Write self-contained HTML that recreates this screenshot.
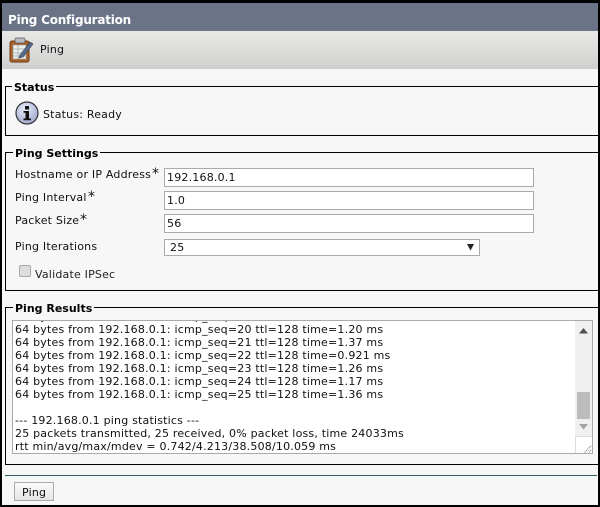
<!DOCTYPE html>
<html><head><meta charset="utf-8"><style>
html,body{margin:0;padding:0;background:#f7f7f7}
#p{position:relative;width:600px;height:507px;overflow:hidden;background:#f7f7f7;font-family:"DejaVu Sans",Verdana,sans-serif;font-size:11px;letter-spacing:.2px;color:#111}
#p div,#p svg{position:absolute}
.t{white-space:pre;line-height:14px}
.b{font-weight:bold;font-size:11px;letter-spacing:0;color:#000;background:#f7f7f7;padding:0 2px}
.fs{left:5px;width:594px;border:1px solid #000;border-right:0;box-sizing:border-box}
.in{left:164px;width:370px;height:19px;background:#fff;border:1px solid #aaa;box-sizing:border-box}
.star{font-size:14px}
</style></head><body><div id="p">
<div style="left:0;top:3px;width:600px;height:28px;background:#6b7387"></div>
<div class="t" style="left:8px;top:13px;font-weight:bold;font-size:12px;letter-spacing:-.22px;color:#fff">Ping Configuration</div>
<div style="left:0;top:31px;width:600px;height:38px;background:linear-gradient(#e9e9e7,#cfcfcd)"></div>
<svg style="left:9px;top:37px" width="25" height="26" viewBox="0 0 25 26"><rect x="1" y="4" width="19" height="21" rx="2" fill="#a8622a" stroke="#6b3a14"/><rect x="4" y="8" width="13" height="14" fill="#eef0ee" stroke="#999" stroke-width=".6"/><path d="M4 12h13M4 16h13M4 19h13M9 8v14" stroke="#9aa" stroke-width=".7"/><rect x="6" y="1" width="10" height="5" rx="1.500" fill="#b8bcc0" stroke="#555" stroke-width=".7"/><path d="M11 18L21 5l3 2-10 13-4 1z" fill="#5a6b8c" stroke="#2d3850" stroke-width=".6"/></svg>
<div class="t" style="left:40px;top:43px;color:#111">Ping</div>

<div class="fs" style="top:86px;height:50px"></div>
<div class="t b" style="left:12px;top:81px">Status</div>
<svg style="left:15px;top:100px" width="24" height="26" viewBox="0 0 24 26"><defs><radialGradient id="g" cx=".4" cy=".3" r=".8"><stop offset="0" stop-color="#e8ecf8"/><stop offset="1" stop-color="#9aa4cc"/></radialGradient></defs><circle cx="12" cy="13" r="11" fill="url(#g)" stroke="#333" stroke-width="1.2"/><rect x="10" y="6" width="4" height="3.500" fill="#111"/><path d="M8.500 11h5.500v7.500h2v1.700H8.500v-1.700h2v-5.800h-2z" fill="#111"/></svg>
<div class="t" style="left:43px;top:108px">Status: Ready</div>

<div class="fs" style="top:152px;height:139px"></div>
<div class="t b" style="left:13px;top:147px">Ping Settings</div>
<div class="t" style="left:15px;top:168px">Hostname or IP Address</div><div class="t star" style="left:152px;top:167px">*</div>
<div class="t" style="left:15px;top:191px">Ping Interval</div><div class="t star" style="left:88px;top:190px">*</div>
<div class="t" style="left:15px;top:214px">Packet Size</div><div class="t star" style="left:80px;top:213px">*</div>
<div class="t" style="left:15px;top:240px">Ping Iterations</div>
<div class="in" style="top:168px"></div><div class="t" style="left:167px;top:171px">192.168.0.1</div>
<div class="in" style="top:191px"></div><div class="t" style="left:167px;top:194px">1.0</div>
<div class="in" style="top:214px"></div><div class="t" style="left:167px;top:217px">56</div>
<div class="in" style="top:239px;width:316px;height:17px"></div><div class="t" style="left:170px;top:241px">25</div>
<svg style="left:466px;top:243px" width="9" height="8"><path d="M1 1h7L4.500 7.500z" fill="#222"/></svg>
<div style="left:19px;top:265px;width:12px;height:12px;background:#ddd;border:1px solid #aaa;border-radius:2px;box-sizing:border-box"></div>
<div class="t" style="left:35px;top:268px;color:#222">Validate IPSec</div>

<div class="fs" style="top:307px;height:158px"></div>
<div class="t b" style="left:13px;top:302px">Ping Results</div>
<div style="left:12px;top:320px;width:581px;height:134px;background:#fff;border:1px solid #aaa;box-sizing:border-box;overflow:hidden">
<div class="t" style="left:2px;top:-11px;line-height:13px;color:#111">64 bytes from 192.168.0.1: icmp_seq=19 ttl=128 time=1.10 ms
64 bytes from 192.168.0.1: icmp_seq=20 ttl=128 time=1.20 ms
64 bytes from 192.168.0.1: icmp_seq=21 ttl=128 time=1.37 ms
64 bytes from 192.168.0.1: icmp_seq=22 ttl=128 time=0.921 ms
64 bytes from 192.168.0.1: icmp_seq=23 ttl=128 time=1.26 ms
64 bytes from 192.168.0.1: icmp_seq=24 ttl=128 time=1.17 ms
64 bytes from 192.168.0.1: icmp_seq=25 ttl=128 time=1.36 ms

--- 192.168.0.1 ping statistics ---
25 packets transmitted, 25 received, 0% packet loss, time 24033ms
rtt min/avg/max/mdev = 0.742/4.213/38.508/10.059 ms</div>
<div style="left:562px;top:0;width:17px;height:115px;background:#f0f0f0"></div>
<svg style="left:566px;top:7px" width="9" height="6"><path d="M0 5.500L4.500 0 9 5.500z" fill="#505050"/></svg>
<div style="left:564px;top:71px;width:13px;height:27px;background:#bcbcbc"></div>
<svg style="left:566px;top:103px" width="9" height="6"><path d="M0 0h9L4.500 5.500z" fill="#a3a3a3"/></svg>
<div style="left:562px;top:115px;width:17px;height:17px;background:#fff;border:1px solid #ddd;border-width:1px 0 0 1px;box-sizing:border-box"></div>
<svg style="left:562px;top:116px" width="17" height="17"><path d="M16 9l-7 7M16 13l-3 3" stroke="#666" stroke-width="1" stroke-dasharray="1 1"/></svg>
</div>

<div style="left:5px;top:475px;width:592px;height:1px;background:#2f5f63"></div>
<div style="left:14px;top:482px;width:40px;height:19px;background:linear-gradient(#fafafa,#e6e6e6);border:1px solid #aaa;box-sizing:border-box"></div>
<div class="t" style="left:22px;top:486px">Ping</div>

<div style="left:0;top:0;width:600px;height:3px;background:#000"></div>
<div style="left:0;top:505px;width:600px;height:2px;background:#000"></div>
<div style="left:0;top:0;width:2px;height:507px;background:#000"></div>
<div style="left:598px;top:0;width:2px;height:507px;background:#000"></div>
</div></body></html>
